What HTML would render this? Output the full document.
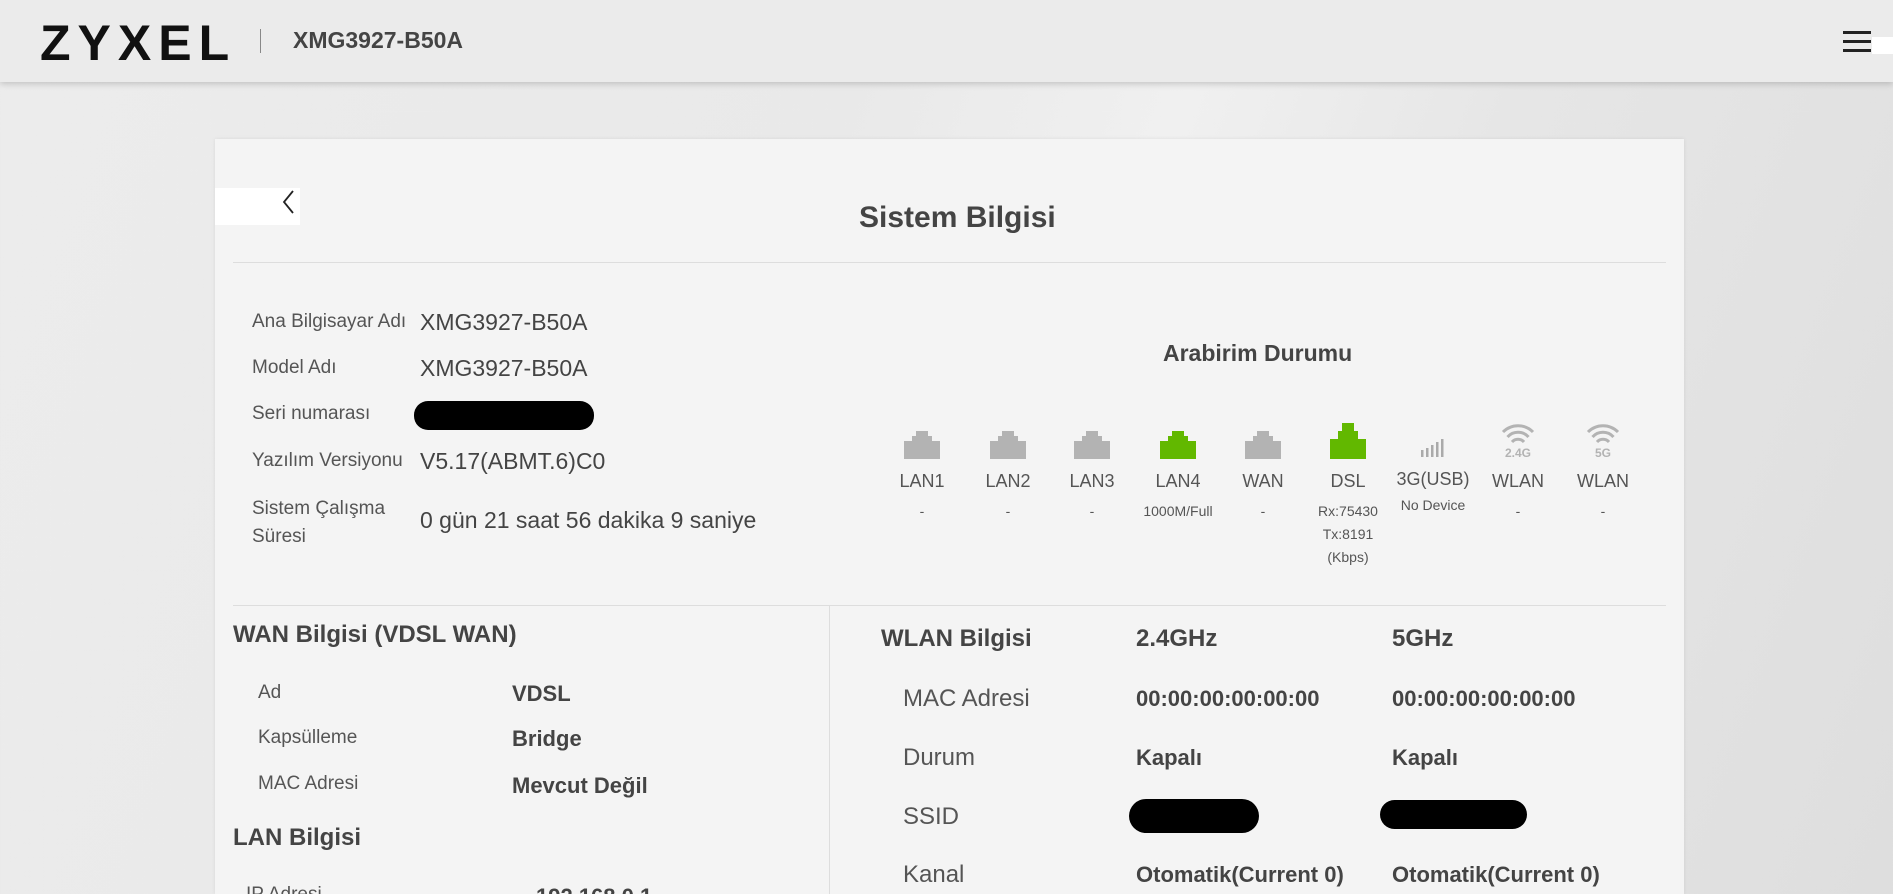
<!DOCTYPE html>
<html><head><meta charset="utf-8"><style>
*{margin:0;padding:0;box-sizing:border-box}
html{width:1893px;height:894px;overflow:hidden}
body{width:1893px;height:894px;overflow:hidden;position:relative;font-family:"Liberation Sans Narrow","Liberation Sans",sans-serif;color:#444;
background:linear-gradient(110deg,#ececec 0%,#e9e9e9 40%,#f0f0f0 55%,#e6e6e6 70%,#dedede 100%);}
.a{position:absolute;white-space:nowrap}
.hdr{position:absolute;left:0;top:0;width:1893px;height:82px;background:#ebebeb;box-shadow:0 2px 6px rgba(0,0,0,.18)}
.card{position:absolute;left:215px;top:139px;width:1469px;height:755px;background:#f4f4f4;box-shadow:0 0 4px rgba(0,0,0,.08)}
.lbl{font-size:19px;color:#555}
.val{font-size:23px;color:#444}
.b{font-weight:bold}
.ic{position:absolute;text-align:center;width:90px;margin-left:-45px}
.ic .n{font-size:18px;color:#555;margin-top:12px}
.ic .s{font-size:14px;color:#555;line-height:23px;margin-top:8px}
.ic .g{height:36px;display:flex;align-items:flex-end;justify-content:center}
</style></head><body>
<div class="hdr"></div>
<div class="a" style="left:40px;top:14px;font-size:50px;font-weight:bold;color:#111;letter-spacing:7px;font-family:'Liberation Sans',sans-serif">ZYXEL</div>
<div class="a" style="left:260px;top:29px;width:1px;height:24px;background:#888"></div>
<div class="a" style="left:293px;top:27px;font-size:23px;font-weight:bold;color:#444;font-family:'Liberation Sans',sans-serif">XMG3927-B50A</div>
<div class="a" style="left:1843px;top:31px;width:28px;height:3px;background:#222"></div>
<div class="a" style="left:1843px;top:40px;width:28px;height:3px;background:#222"></div>
<div class="a" style="left:1843px;top:49px;width:28px;height:3px;background:#222"></div>
<div class="a" style="left:1872px;top:37px;width:21px;height:17px;background:#fff"></div>

<div class="card"></div>
<div class="a" style="left:215px;top:188px;width:85px;height:37px;background:#fff"></div>
<svg class="a" style="left:280px;top:188px" width="16" height="28"><path d="M13 3 L4 14 L13 25" stroke="#222" stroke-width="1.8" fill="none"/></svg>
<div class="a b" style="left:859px;top:201px;font-size:30px;color:#444">Sistem Bilgisi</div>
<div class="a" style="left:233px;top:262px;width:1433px;height:1px;background:#ddd"></div>

<div class="a lbl" style="left:252px;top:311px">Ana Bilgisayar Adı</div><div class="a val" style="left:420px;top:309px">XMG3927-B50A</div>
<div class="a lbl" style="left:252px;top:357px">Model Adı</div><div class="a val" style="left:420px;top:355px">XMG3927-B50A</div>
<div class="a lbl" style="left:252px;top:403px">Seri numarası</div>
<div class="a" style="left:414px;top:401px;width:180px;height:29px;background:#000;border-radius:14px"></div>
<div class="a lbl" style="left:252px;top:450px">Yazılım Versiyonu</div><div class="a val" style="left:420px;top:448px">V5.17(ABMT.6)C0</div>
<div class="a lbl" style="left:252px;top:495px;line-height:28px">Sistem Çalışma<br>Süresi</div><div class="a val" style="left:420px;top:507px">0 gün 21 saat 56 dakika 9 saniye</div>

<div class="a b" style="left:1163px;top:340px;font-size:23px;color:#444">Arabirim Durumu</div>

<div class="a" style="left:0;top:423px;width:1893px">
<div class="ic" style="left:922px"><div class="g"><svg width="36" height="28"><path d="M12 0h12v5h4v5h8v18H0V10h8V5h4z" fill="#b3b3b3"/></svg></div><div class="n">LAN1</div><div class="s">-</div></div>
<div class="ic" style="left:1008px"><div class="g"><svg width="36" height="28"><path d="M12 0h12v5h4v5h8v18H0V10h8V5h4z" fill="#b3b3b3"/></svg></div><div class="n">LAN2</div><div class="s">-</div></div>
<div class="ic" style="left:1092px"><div class="g"><svg width="36" height="28"><path d="M12 0h12v5h4v5h8v18H0V10h8V5h4z" fill="#b3b3b3"/></svg></div><div class="n">LAN3</div><div class="s">-</div></div>
<div class="ic" style="left:1178px"><div class="g"><svg width="36" height="28"><path d="M12 0h12v5h4v5h8v18H0V10h8V5h4z" fill="#62b800"/></svg></div><div class="n">LAN4</div><div class="s">1000M/Full</div></div>
<div class="ic" style="left:1263px"><div class="g"><svg width="36" height="28"><path d="M12 0h12v5h4v5h8v18H0V10h8V5h4z" fill="#b3b3b3"/></svg></div><div class="n">WAN</div><div class="s">-</div></div>
<div class="ic" style="left:1348px"><div class="g"><svg width="36" height="36"><path d="M12 0h12v8h4v8h8v20H0V16h8V8h4z" fill="#62b800"/></svg></div><div class="n">DSL</div><div class="s">Rx:75430<br>Tx:8191<br>(Kbps)</div></div>
<div class="ic" style="left:1433px"><div class="g"><svg width="28" height="22"><rect x="2" y="13" width="2.5" height="7" fill="#aaa"/><rect x="7" y="11" width="2.5" height="9" fill="#aaa"/><rect x="12" y="8" width="2.5" height="12" fill="#aaa"/><rect x="17" y="5" width="2.5" height="15" fill="#aaa"/><rect x="22" y="2" width="2.5" height="18" fill="#aaa"/></svg></div><div class="n" style="margin-top:10px">3G(USB)</div><div class="s" style="margin-top:4px">No Device</div></div>
<div class="ic" style="left:1518px"><div class="g"><svg width="40" height="38"><path d="M5 11a21 21 0 0 1 30 0M9.5 16a14 14 0 0 1 21 0M14 21a8 8 0 0 1 12 0" stroke="#b3b3b3" stroke-width="3" fill="none"/><text x="20" y="36" font-size="12" font-weight="bold" fill="#b3b3b3" text-anchor="middle" font-family="Liberation Sans">2.4G</text></svg></div><div class="n">WLAN</div><div class="s">-</div></div>
<div class="ic" style="left:1603px"><div class="g"><svg width="40" height="38"><path d="M5 11a21 21 0 0 1 30 0M9.5 16a14 14 0 0 1 21 0M14 21a8 8 0 0 1 12 0" stroke="#b3b3b3" stroke-width="3" fill="none"/><text x="20" y="36" font-size="12" font-weight="bold" fill="#b3b3b3" text-anchor="middle" font-family="Liberation Sans">5G</text></svg></div><div class="n">WLAN</div><div class="s">-</div></div>
</div>

<div class="a" style="left:233px;top:605px;width:1433px;height:1px;background:#ddd"></div>
<div class="a" style="left:829px;top:606px;width:1px;height:290px;background:#ddd"></div>

<div class="a b" style="left:233px;top:621px;font-size:24px">WAN Bilgisi (VDSL WAN)</div>
<div class="a lbl" style="left:258px;top:682px">Ad</div><div class="a b" style="left:512px;top:681px;font-size:22px">VDSL</div>
<div class="a lbl" style="left:258px;top:727px">Kapsülleme</div><div class="a b" style="left:512px;top:726px;font-size:22px">Bridge</div>
<div class="a lbl" style="left:258px;top:773px">MAC Adresi</div><div class="a b" style="left:512px;top:773px;font-size:22px">Mevcut Değil</div>
<div class="a b" style="left:233px;top:824px;font-size:24px">LAN Bilgisi</div>
<div class="a lbl" style="left:246px;top:884px">IP Adresi</div><div class="a b" style="left:536px;top:884px;font-size:22px">192.168.0.1</div>

<div class="a b" style="left:881px;top:625px;font-size:24px">WLAN Bilgisi</div>
<div class="a b" style="left:1136px;top:625px;font-size:24px">2.4GHz</div>
<div class="a b" style="left:1392px;top:625px;font-size:24px">5GHz</div>
<div class="a" style="left:903px;top:685px;font-size:24px;color:#555">MAC Adresi</div>
<div class="a b" style="left:1136px;top:686px;font-size:22px">00:00:00:00:00:00</div>
<div class="a b" style="left:1392px;top:686px;font-size:22px">00:00:00:00:00:00</div>
<div class="a" style="left:903px;top:744px;font-size:24px;color:#555">Durum</div>
<div class="a b" style="left:1136px;top:745px;font-size:22px">Kapalı</div>
<div class="a b" style="left:1392px;top:745px;font-size:22px">Kapalı</div>
<div class="a" style="left:903px;top:803px;font-size:24px;color:#555">SSID</div>
<div class="a" style="left:1129px;top:799px;width:130px;height:34px;background:#000;border-radius:17px"></div>
<div class="a" style="left:1380px;top:800px;width:147px;height:29px;background:#000;border-radius:15px"></div>
<div class="a" style="left:903px;top:861px;font-size:24px;color:#555">Kanal</div>
<div class="a b" style="left:1136px;top:862px;font-size:22px">Otomatik(Current 0)</div>
<div class="a b" style="left:1392px;top:862px;font-size:22px">Otomatik(Current 0)</div>
</body></html>
